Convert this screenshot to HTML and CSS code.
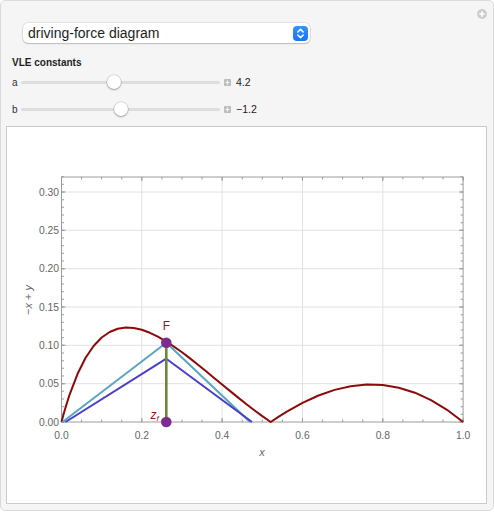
FILE: index.html
```html
<!DOCTYPE html>
<html lang="en">
<head>
    <meta charset="UTF-8">
    <title>Driving-Force Diagram</title>
    <link rel="stylesheet" href="styles.css">
</head>
<body>
    <div class="panel">
        <span class="add-btn">
            <svg width="10" height="10" viewBox="0 0 10 10"><circle cx="5" cy="5" r="5" fill="#cdcdcd"/><path d="M5 2.3v5.4M2.3 5h5.4" stroke="#fff" stroke-width="1.6"/></svg>
        </span>
        <div class="menu">
            <span class="menu-label">driving-force diagram</span>
            <span class="menu-arrows">
                <svg width="15" height="15" viewBox="0 0 15 15"><path d="M4.8 6 L7.5 3.4 L10.2 6 M4.8 9 L7.5 11.6 L10.2 9" fill="none" stroke="#fff" stroke-width="1.5" stroke-linecap="round" stroke-linejoin="round"/></svg>
            </span>
        </div>
        <div class="controls">
            <div class="group-title">VLE constants</div>
            <div class="slider-row">
                <span class="slider-name">a</span>
                <div class="track"><span class="thumb" style="left: 46.9%"></span></div>
                <span class="stepper"><svg width="7" height="7" viewBox="0 0 7 7"><rect width="7" height="7" rx="1" fill="#bdbdbd"/><path d="M3.5 1.5v4M1.5 3.5h4" stroke="#fff" stroke-width="1.2"/></svg></span>
                <span class="value">4.2</span>
            </div>
            <div class="slider-row">
                <span class="slider-name">b</span>
                <div class="track"><span class="thumb" style="left: 50.1%"></span></div>
                <span class="stepper"><svg width="7" height="7" viewBox="0 0 7 7"><rect width="7" height="7" rx="1" fill="#bdbdbd"/><path d="M3.5 1.5v4M1.5 3.5h4" stroke="#fff" stroke-width="1.2"/></svg></span>
                <span class="value">&minus;1.2</span>
            </div>
        </div>
        <div class="plot">
            <svg class="chart" width="479" height="376" viewBox="7 127 479 376">
                <!-- grid -->
                <g stroke="#e2e2e2" stroke-width="1">
                    <path d="M141.8 177V422M222.1 177V422M302.5 177V422M382.8 177V422"/>
                    <path d="M61.5 383.7H463M61.5 345.3H463M61.5 307H463M61.5 268.7H463M61.5 230.3H463M61.5 192H463"/>
                </g>
                <!-- frame and ticks -->
                <g stroke="#9c9c9c" fill="none">
                    <rect x="61.5" y="177" width="401.6" height="245" stroke-width="1"/>
                    <line x1="61" y1="420.75" x2="464" y2="420.75" stroke-width="2.5" stroke-dasharray="1 19.08"/>
                    <line x1="61" y1="420" x2="464" y2="420" stroke-width="4" stroke-dasharray="1 79.32"/>
                    <line x1="61" y1="178.25" x2="464" y2="178.25" stroke-width="2.5" stroke-dasharray="1 19.08"/>
                    <line x1="61" y1="179" x2="464" y2="179" stroke-width="4" stroke-dasharray="1 79.32"/>
                    <line x1="62.75" y1="422.5" x2="62.75" y2="176" stroke-width="2.5" stroke-dasharray="1 6.667"/>
                    <line x1="63.5" y1="422.5" x2="63.5" y2="176" stroke-width="4" stroke-dasharray="1 37.333"/>
                    <line x1="461.85" y1="422.5" x2="461.85" y2="176" stroke-width="2.5" stroke-dasharray="1 6.667"/>
                    <line x1="461.1" y1="422.5" x2="461.1" y2="176" stroke-width="4" stroke-dasharray="1 37.333"/>
                </g>
                <!-- tick labels -->
                <g class="tick-label" text-anchor="end">
                    <text x="59" y="425.7">0.00</text>
                    <text x="59" y="387.4">0.05</text>
                    <text x="59" y="349">0.10</text>
                    <text x="59" y="310.7">0.15</text>
                    <text x="59" y="272.4">0.20</text>
                    <text x="59" y="234">0.25</text>
                    <text x="59" y="195.7">0.30</text>
                </g>
                <g class="tick-label" text-anchor="middle">
                    <text x="61.5" y="439">0.0</text>
                    <text x="141.8" y="439">0.2</text>
                    <text x="222.1" y="439">0.4</text>
                    <text x="302.5" y="439">0.6</text>
                    <text x="382.8" y="439">0.8</text>
                    <text x="463.1" y="439">1.0</text>
                </g>
                <text class="axis-label" x="262" y="456" text-anchor="middle">x</text>
                <text class="axis-label upright" transform="translate(32 300) rotate(-90)" text-anchor="middle">&minus;<tspan font-style="italic">x</tspan> + <tspan font-style="italic">y</tspan></text>
                <!-- driving force curve -->
                <polyline fill="none" stroke="#8e0a0a" stroke-width="2" stroke-linejoin="round"
                    points="61.5,422 63.5,414.6 65.5,407.6 69.5,394.8 77.6,373.8 85.6,357.8 93.6,346 101.7,337.5 109.7,332 117.7,328.8 125.8,327.6 133.8,328 141.8,329.8 149.9,332.8 157.9,336.7 165.9,341.3 173.9,346.6 182,352.3 190,358.4 198,364.8 206.1,371.3 214.1,377.9 222.1,384.6 230.2,391.1 238.2,397.6 246.2,404 254.3,410.2 262.3,416.1 270.7,422 278.4,416.8 286.4,411.8 302.5,402.8 318.5,395.5 334.6,389.9 350.7,386.2 366.7,384.6 382.8,385.1 398.8,387.7 414.9,392.7 431,400.1 447,409.8 463.1,422"/>
                <polyline fill="none" stroke="#58a6c3" stroke-width="2" stroke-linejoin="round" points="62.5,422 166.3,342.7 250,422"/>
                <polyline fill="none" stroke="#4b3ec9" stroke-width="2" stroke-linejoin="round" points="65.5,422 166.3,358.7 252,422"/>
                <line x1="166.3" y1="342.7" x2="166.3" y2="422" stroke="#6b8a33" stroke-width="2.6"/>
                <circle cx="166.3" cy="342.7" r="5.3" fill="#7e2b90"/>
                <circle cx="166.3" cy="422" r="5.3" fill="#7e2b90"/>
                <text class="point-label" x="166.3" y="329.5" text-anchor="middle">F</text>
                <text class="point-label" x="150.5" y="418.5"><tspan font-style="italic">z</tspan><tspan class="sub" font-style="italic" dy="2.5">f</tspan></text>
            </svg>
        </div>
    </div>
</body>
</html>
```

FILE: styles.css
```css
html, body
{
    margin: 0;
    padding: 0;
    background: #fff;
}
body
{
    font-family: 'Liberation Sans', 'Arial', sans-serif;
    color: #222;
}
.panel
{
    position: relative;
    width: 494px;
    height: 511px;
    box-sizing: border-box;
    background: #f5f5f5;
    border: 1px solid #dadada;
    border-radius: 5px;
    padding-top: 22px;
}
.add-btn
{
    position: absolute;
    top: 8px;
    right: 6px;
    width: 10px;
    height: 10px;
    line-height: 0;
}
.menu
{
    display: flex;
    align-items: center;
    justify-content: space-between;
    width: 287px;
    height: 20px;
    box-sizing: border-box;
    margin-left: 22px;
    padding: 0 2px 0 5px;
    background: #fff;
    border-radius: 5px;
    box-shadow: 0 0 0 0.5px rgba(0, 0, 0, 0.14), 0 1px 1.5px rgba(0, 0, 0, 0.18);
}
.menu-label
{
    font-size: 14px;
    color: #1e1e1e;
}
.menu-arrows
{
    display: flex;
    width: 15px;
    height: 15px;
    border-radius: 4px;
    background: linear-gradient(#3b93f8, #1575f3);
}
.controls
{
    margin: 14px 0 0 11px;
}
.group-title
{
    font-size: 10px;
    font-weight: bold;
    line-height: 12px;
    color: #1e1e1e;
}
.slider-row
{
    display: flex;
    align-items: center;
    height: 14px;
    margin-top: 6px;
}
.slider-row + .slider-row
{
    margin-top: 13px;
}
.slider-name
{
    width: 9px;
    font-size: 10px;
    color: #333;
}
.track
{
    position: relative;
    width: 199px;
    height: 3px;
    border-radius: 2px;
    background: #dedede;
}
.thumb
{
    position: absolute;
    top: 50%;
    width: 14px;
    height: 14px;
    border-radius: 50%;
    background: #fff;
    transform: translate(-50%, -50%);
    box-shadow: 0 0 0 0.5px rgba(0, 0, 0, 0.18), 0 1px 2px rgba(0, 0, 0, 0.3);
}
.stepper
{
    display: flex;
    margin-left: 4px;
}
.value
{
    margin-left: 5px;
    font-size: 10.5px;
    color: #222;
}
.plot
{
    width: 481px;
    height: 378px;
    box-sizing: border-box;
    margin: 10px 0 0 5px;
    background: #fff;
    border: 1px solid #cbcbcb;
}
.chart
{
    display: block;
}
.tick-label text
{
    font-size: 10.3px;
    fill: #666;
}
.axis-label
{
    font-size: 11px;
    font-style: italic;
    fill: #666;
}
.axis-label.upright
{
    font-style: normal;
}
.point-label
{
    font-size: 12px;
    fill: #8b1c1c;
}
.point-label .sub
{
    font-size: 8px;
}
```
